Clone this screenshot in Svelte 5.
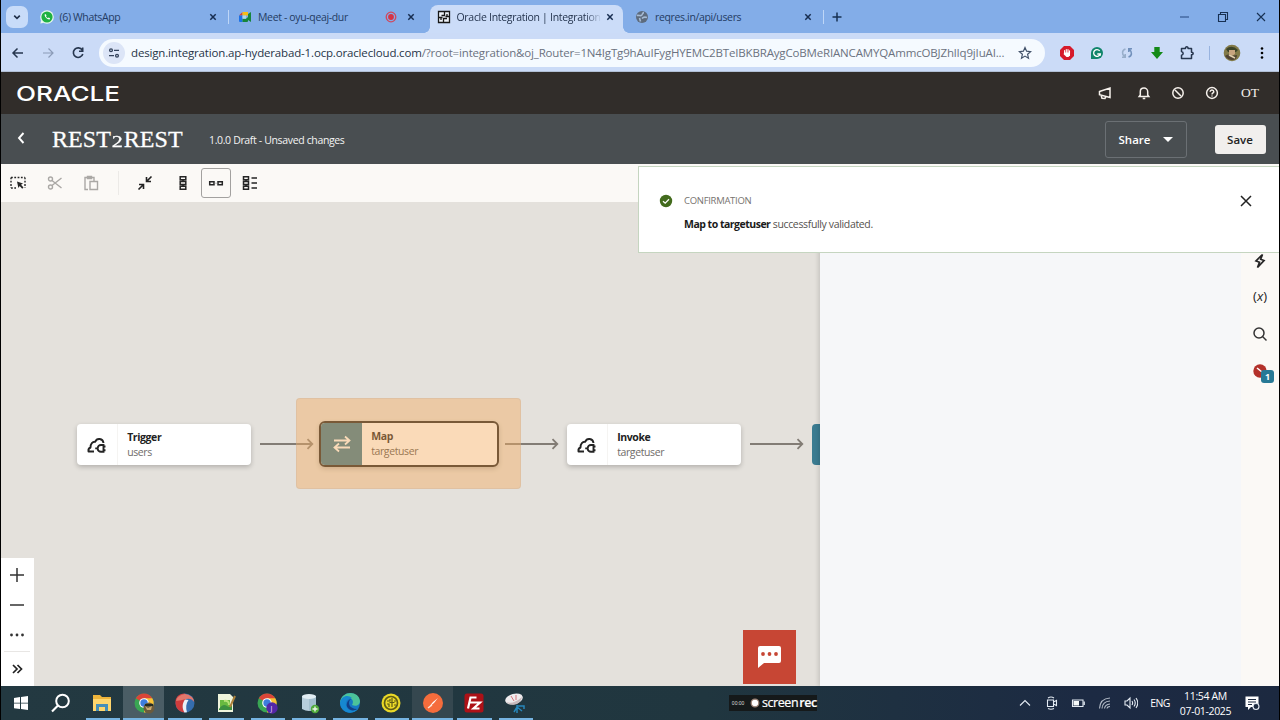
<script lang="ts">
	type Tab = {
		title: string;
		icon: 'whatsapp' | 'meet' | 'oic' | 'globe';
		active?: boolean;
		recording?: boolean;
	};

	const tabs: Tab[] = [
		{ title: '(6) WhatsApp', icon: 'whatsapp' },
		{ title: 'Meet - oyu-qeaj-dur', icon: 'meet', recording: true },
		{ title: 'Oracle Integration | Integrations', icon: 'oic', active: true },
		{ title: 'reqres.in/api/users', icon: 'globe' }
	];

	const apps = [
		{ name: 'start' },
		{ name: 'search' },
		{ name: 'explorer', open: true },
		{ name: 'chrome', open: true, focused: true },
		{ name: 'sqldev', open: true },
		{ name: 'notepad', open: true },
		{ name: 'chrome-j', open: true },
		{ name: 'database', open: true },
		{ name: 'edge', open: true },
		{ name: 'coin', open: true },
		{ name: 'postman', open: true, lit: true },
		{ name: 'filezilla', open: true },
		{ name: 'snip', open: true }
	];

	const nodes = [
		{ x: 76, title: 'Trigger', sub: 'users' },
		{ x: 566, title: 'Invoke', sub: 'targetuser' }
	];

	const arrows = [259, 504, 749];
</script>

<div class="screen">
	<div class="tabstrip">
		<div class="tab-search">
			<svg width="10" height="10" viewBox="0 0 10 10"><path d="M2.2 3.6 5 6.4l2.8-2.8" fill="none" stroke="#20304a" stroke-width="1.6" /></svg>
		</div>
		{#each tabs as tab}
			<div class="tab" class:active={tab.active}>
				<svg class="favicon" width="14" height="14" viewBox="0 0 14 14">
					{#if tab.icon === 'whatsapp'}
						<circle cx="7" cy="7" r="6.8" fill="#e8f8ee" /><path d="M.4 13.6 1.2 10l2.8 2.8Z" fill="#e8f8ee" />
						<circle cx="7" cy="7" r="5.6" fill="#1fb141" />
						<path d="M4.8 4.2c-.9 2 2.6 5.7 4.8 5.2l.5-1.1-1.5-.8-.7.7C6.9 7.8 6.2 7 6 6.3l.5-.6-.6-1.5Z" fill="#fff" />
					{:else if tab.icon === 'meet'}
						<path d="M1 5.5 4.5 2v3.5Z" fill="#d93f35" /><path d="M4.5 2H10v3.5H4.5Z" fill="#f5bd16" />
						<path d="M1 5.5h3.5V12H2a1 1 0 0 1-1-1Z" fill="#1b72e8" />
						<path d="M4.5 8.7H8L10 7V4l3-2v10l-3-2v1a1 1 0 0 1-1 1H4.5Z" fill="#17853c" />
						<path d="M4.5 5.5H8v3.2H4.5Z" fill="#aed6e5" />
					{:else if tab.icon === 'oic'}
						<path d="M1.5 1.5h11v11h-11ZM7.5 2v3.500H4.500M12 6.500H8.500M6.500 12V8.500h3.500M2 7.500h3.500M10 4v2.500M4 7.500V10" fill="#eef2f8" stroke="#171717" stroke-width="1.3" />
					{:else}
						<circle cx="7" cy="7" r="6" fill="#5d6b7d" />
						<path d="M1.8 5.5c2-.6 3 .5 4.5 0S7 2.7 9 2.6M7 8.5c1.2-1.5 3.2-1.6 5-1M4.5 8l1 3.5" fill="none" stroke="#a6bbd5" stroke-width="1.6" />
					{/if}
				</svg>
				<span class="tab-title">{tab.title}</span>
				{#if tab.recording}
					<svg class="rec" width="12" height="12" viewBox="0 0 12 12"><circle cx="6" cy="6" r="4.8" fill="none" stroke="#cf485e" stroke-width="1.3" /><circle cx="6" cy="6" r="2.9" fill="#d63345" /></svg>
				{/if}
				<svg class="tab-close" width="8" height="8" viewBox="0 0 8 8"><path d="m1.3 1.3 5.4 5.4m0-5.4L1.3 6.7" stroke="#172d50" stroke-width="1.5" /></svg>
			</div>
		{/each}
		<svg class="new-tab" width="12" height="12" viewBox="0 0 12 12"><path d="M6 1.5v9M1.5 6h9" stroke="#173052" stroke-width="1.5" /></svg>
		<div class="window-buttons">
			<svg width="12" height="12" viewBox="0 0 12 12"><path d="M1 6h9" stroke="#24477e" /></svg>
			<svg width="12" height="12" viewBox="0 0 12 12"><path d="M1.5 3.5h7v7h-7ZM3.5 3.5v-2h7v7h-2" fill="none" stroke="#173052" stroke-width="1.1" /></svg>
			<svg width="12" height="12" viewBox="0 0 12 12"><path d="m2 2 8 8m0-8-8 8" stroke="#173052" stroke-width="1.1" /></svg>
		</div>
	</div>

	<div class="browser-bar">
		<div class="cell"><svg width="14" height="14" viewBox="0 0 14 14"><path d="M12 7H2.5M6.5 2.5 2 7l4.5 4.5" fill="none" stroke="#26364f" stroke-width="1.5" /></svg></div>
		<div class="cell"><svg width="14" height="14" viewBox="0 0 14 14"><path d="M2 7h9.5M7.5 2.5 12 7l-4.500 4.500" fill="none" stroke="#8b9bb7" stroke-width="1.2" /></svg></div>
		<div class="cell"><svg width="14" height="14" viewBox="0 0 14 14"><path d="M11.2 4A4.8 4.8 0 1 0 11.8 8M11.7 1.500v3.800H8" fill="none" stroke="#26364f" stroke-width="1.6" /></svg></div>
		<div class="address">
			<span class="site-info">
				<svg width="12" height="12" viewBox="0 0 12 12"><g fill="none" stroke="#34435b" stroke-width="1.3"><circle cx="3" cy="3.3" r="1.4" /><path d="M6 3.3h5M1 8.7h5" /><circle cx="9" cy="8.7" r="1.4" /></g></svg>
			</span>
			<span class="url"><b>design.integration.ap-hyderabad-1.ocp.oraclecloud.com</b>/?root=integration&amp;oj_Router=1N4IgTg9hAuIFygHYEMC2BTeIBKBRAygCoBMeRIANCAMYQAmmcOBJZhlIq9jIuAI...</span>
			<svg class="star" width="14" height="14" viewBox="0 0 14 14"><path d="m7 1.5 1.6 3.7 4 .4-3 2.7.9 3.9L7 10.1l-3.500 2.100.9-3.900-3-2.700 4-.4Z" fill="none" stroke="#42526a" stroke-width="1.2" /></svg>
		</div>
		<div class="extensions">
			<div class="cell"><svg width="16" height="16" viewBox="0 0 16 16"><path d="M5 1h6l4 4v6l-4 4H5l-4-4V5Z" fill="#d61a2b" /><path d="M5.6 8V5.500M7.300 8V4.500M9 8V4.500M10.500 8.500V5.800" stroke="#fff" stroke-width="1.1" stroke-linecap="round" /><path d="M5 7.500h6v2.700l-1.500 1.800H7.500L4.700 9.300Z" fill="#fff" /></svg></div>
			<div class="cell"><svg width="14" height="14" viewBox="0 0 14 14"><path d="M1 13V7a6 6 0 1 1 6 6Z" fill="#10856b" /><path d="M9.7 4.8A3.4 3.4 0 1 0 10.3 8H7.3M10.3 7.3v2.5" fill="none" stroke="#fff" stroke-width="1.3" /></svg></div>
			<div class="cell"><svg width="14" height="14" viewBox="0 0 14 14"><path d="M5.500 3C2 4 1.500 8 4.500 10.500M2 11.300h3.200V8" fill="none" stroke="#98aeca" stroke-width="1.6" /><path d="M8.500 11c3.500-1 4-5 1-7.500M12 2.700H8.800V6" fill="none" stroke="#7190bb" stroke-width="1.6" /></svg></div>
			<div class="cell"><svg width="14" height="14" viewBox="0 0 14 14"><path d="M4.3 1h5.4v5H13l-6 7-6-7h3.3Z" fill="#138a18" /></svg></div>
			<div class="cell"><svg width="16" height="16" viewBox="0 0 16 16"><path d="M2.5 3.500h4C6 1.200 9.500 1.200 9 3.500h3.500v3.800c2.200-.3 2.200 2.700 0 2.400v3.800h-10v-3.200c2.200-.7 2.200-3.100 0-3.800Z" fill="none" stroke="#27364e" stroke-width="1.5" stroke-linejoin="round" /></svg></div>
		</div>
		<i class="bar-sep"></i>
		<div class="cell"><svg width="18" height="18" viewBox="0 0 18 18"><circle cx="9" cy="9" r="8.3" fill="#827a49" /><path d="M3 5q6-5 12 1l-2 2H5Z" fill="#3d4429" /><path d="M6 6h6v4l-3 2-3-2Z" fill="#c7a47f" /><path d="M2 12q3-3 6 0l6-1q0 5-5 5-4 0-7-4Z" fill="#504333" /><path d="m6 11 6 3" stroke="#e0cfaf" stroke-width="1.5" /></svg></div>
		<div class="cell"><svg width="4" height="14" viewBox="0 0 4 14"><circle cx="2" cy="2.5" r="1.3" /><circle cx="2" cy="7" r="1.3" /><circle cx="2" cy="11.5" r="1.3" /></svg></div>
	</div>

	<header class="oracle-bar">
		<svg class="logo" width="108" height="30" viewBox="0 0 108 30"><text x="1" y="22.5" textLength="104" lengthAdjust="spacingAndGlyphs">ORACLE</text></svg>
		<div class="header-icons">
			<svg width="14" height="14" viewBox="0 0 14 14"><path d="M1.5 5.5 12 2v9.5L1.5 8.7ZM3 9l1 3.3 3 .2.7-2" /></svg>
			<svg width="14" height="14" viewBox="0 0 14 14"><path d="M2.2 10.5h9.6L10.7 9V5.7c0-4.8-7.400-4.8-7.400 0V9ZM5.700 12.500h2.600" /></svg>
			<svg width="14" height="14" viewBox="0 0 14 14"><circle cx="7" cy="7" r="5.2" /><path d="m4 4 6 6" /></svg>
			<svg width="14" height="14" viewBox="0 0 14 14"><circle cx="7" cy="7" r="5.4" /><path d="M5.2 5.8c0-2.3 3.6-2.2 3.6 0C8.8 7 7 6.9 7 8.5M7 9.4v1.200" /></svg>
			<span>OT</span>
		</div>
	</header>

	<div class="title-bar">
		<svg class="back" width="10" height="14" viewBox="0 0 10 14"><path d="M7.5 2 3 7l4.5 5" fill="none" stroke="#fff" stroke-width="1.9" /></svg>
		<h1>REST<small>2</small>REST</h1>
		<span class="version">1.0.0 Draft - Unsaved changes</span>
		<button class="share">Share <i></i></button>
		<button class="save">Save</button>
	</div>

	<div class="tools">
		<svg width="16" height="16" viewBox="0 0 16 16"><path d="M1 2.5h14M1 2.5V13M15 2.5V13M1 13h5" fill="none" stroke="#252525" stroke-width="1.4" stroke-dasharray="1.8 1.5" /><path d="m7 6.5 6 2-2 1.300 2.500 2.800-1.300 1.200-2.500-2.900L8.400 13Z" fill="#252525" /></svg>
		<svg class="dim" width="16" height="16" viewBox="0 0 16 16"><circle cx="3.5" cy="4" r="2" /><circle cx="3.5" cy="12" r="2" /><path d="m5 5.5 9.5 7.5M5 10.5 14.5 3" /></svg>
		<svg class="dim" width="16" height="16" viewBox="0 0 16 16"><path d="M5 14.5H2v-12h9V6M4.5 1.5h4v2h-4ZM7 6.5h7.5v8H7Z" /></svg>
		<i class="tool-sep"></i>
		<svg width="16" height="16" viewBox="0 0 16 16"><path d="m14.5 1.5-5 5M9.5 2v4.5H14M1.5 14.5l5-5M2 9.5h4.5V14" fill="none" stroke="#222" stroke-width="1.6" /></svg>
		<svg width="16" height="16" viewBox="0 0 16 16"><path d="M5.2 1.7h5.6v3H5.2ZM5.2 6.5h5.6v3H5.2ZM5.2 11.3h5.6v3H5.2ZM8 4.7v1.8M8 9.5v1.800" fill="none" stroke="#252525" stroke-width="1.5" /></svg>
		<span class="picked"><svg width="16" height="16" viewBox="0 0 16 16"><path d="M1.7 6.7H6v3H1.7ZM10 6.7h4.3v3H10Z" fill="none" stroke="#252525" stroke-width="1.5" /><path d="M6.700 8.200h2.600" stroke="#aaa" stroke-width=".8" /></svg></span>
		<svg width="16" height="16" viewBox="0 0 16 16"><path d="M1.5 1.7h5v3h-5ZM1.5 6.5h5v3h-5ZM1.5 11.3h5v3h-5ZM9.5 3H15M9.5 8H15M9.5 13H15M4 4.7v1.8M4 9.5v1.800" fill="none" stroke="#252525" stroke-width="1.5" /></svg>
	</div>

	<main>
		<div class="canvas">
			{#each nodes as node}
				<div class="node" style:left="{node.x}px">
					<div class="node-icon">
						<svg width="22" height="20" viewBox="0 0 22 20"><path d="M8 16.500H2.500c-.5-2.500.8-3.500 2-4C4.500 8.500 6.500 6.500 9.300 6.800c1.500-4.300 7.700-3.500 8.200 1.200" fill="none" stroke="#242424" stroke-width="1.9" stroke-linejoin="round" /><path d="M17.500 10H15a3.400 3.400 0 0 0 0 6.800h2.500ZM9.200 13.400h2.400M17.500 11.500h2M17.500 15.300h2" fill="none" stroke="#242424" stroke-width="1.9" /></svg>
					</div>
					<div class="node-text"><b>{node.title}</b><span>{node.sub}</span></div>
				</div>
			{/each}
			<div class="node map">
				<div class="node-icon">
					<svg width="20" height="18" viewBox="0 0 20 18"><path d="M2 5.5h15M13 1.5l4.5 4-4.5 4M18 12.5H3M7 8.5l-4.5 4 4.5 4" fill="none" stroke="#fff" stroke-width="1.8" /></svg>
				</div>
				<div class="node-text"><b>Map</b><span>targetuser</span></div>
			</div>
			{#each arrows as x}
				<svg class="arrow" style:left="{x}px" width="56" height="12" viewBox="0 0 56 12"><path d="M0 6h52.5M47.5 1.2 52.3 6l-4.8 4.8" fill="none" stroke="#827c75" stroke-width="1.8" /></svg>
			{/each}
			<div class="node-cut"></div>
			<div class="selection"></div>

			<div class="zoom-panel">
				<svg width="16" height="16" viewBox="0 0 16 16"><path d="M8 1v14M1 8h14" stroke="#333" stroke-width="1.5" /></svg>
				<svg width="16" height="16" viewBox="0 0 16 16"><path d="M1 8h14" stroke="#333" stroke-width="1.5" /></svg>
				<svg width="16" height="16" viewBox="0 0 16 16"><circle cx="2.5" cy="8" r="1.4" fill="#333" /><circle cx="8" cy="8" r="1.4" fill="#333" /><circle cx="13.5" cy="8" r="1.4" fill="#333" /></svg>
				<svg class="expand" width="16" height="16" viewBox="0 0 16 16"><path d="m4 4 4 4-4 4M8.5 4l4 4-4 4" fill="none" stroke="#222" stroke-width="1.7" /></svg>
			</div>
			<button class="chat" aria-label="Chat">
				<svg width="26" height="24" viewBox="0 0 26 24"><path d="M3 1h19a2 2 0 0 1 2 2v13a2 2 0 0 1-2 2H7l-6 5V3a2 2 0 0 1 2-2Z" fill="#fff" /><g fill="#c74634"><circle cx="6" cy="9" r="1.9" /><circle cx="12.5" cy="9" r="1.9" /><circle cx="19" cy="9" r="1.9" /></g></svg>
			</button>
		</div>
		<aside class="panel"></aside>
		<nav class="rail">
			<svg width="16" height="16" viewBox="0 0 16 16"><path d="M10.5 1.5 4 8l3.5 1.2-2 5.3 6.5-7-3.300-1.200Z" fill="none" stroke="#252525" stroke-width="1.7" /></svg>
			<span class="vars">(<i>x</i>)</span>
			<svg width="16" height="16" viewBox="0 0 16 16"><circle cx="7" cy="7" r="5" fill="none" stroke="#333" stroke-width="1.5" /><path d="m10.5 10.5 4 4" stroke="#333" stroke-width="1.5" /></svg>
			<span class="errors">
				<svg width="14" height="14" viewBox="0 0 14 14"><circle cx="7" cy="7" r="6.7" fill="#b3312a" /><path d="m4 4 5 4" stroke="#fff" stroke-width="1.6" /></svg>
				<b>1</b>
			</span>
		</nav>
	</main>

	<footer class="taskbar">
		{#each apps as app}
			<div class="app" class:open={app.open} class:focused={app.focused} class:lit={app.lit}>
				<svg width="22" height="22" viewBox="0 0 22 22">
					{#if app.name === 'start'}
						<path d="m4 6 6-.9v5.6H4Zm7-1 7-1v6.7h-7ZM4 11.5h6v5.6l-6-.9Zm7 0h7V18l-7-1Z" fill="#fff" />
					{:else if app.name === 'search'}
						<circle cx="12.5" cy="9" r="6.3" fill="none" stroke="#fff" stroke-width="2" /><path d="m8 13.5-6 6" stroke="#fff" stroke-width="2.2" />
					{:else if app.name === 'explorer'}
						<path d="M2 3h7l2 2h9v14H2Z" fill="#eeb43b" /><path d="M2 7h18v12H2Z" fill="#ffd66d" /><path d="M5 19v-7h12v7h-3v-4H8v4Z" fill="#478fb8" />
					{:else if app.name === 'chrome' || app.name === 'chrome-j'}
						<circle cx="11" cy="11" r="9.5" fill="#39a653" />
						<path d="M11 11 2.8 6.2a9.5 9.5 0 0 1 16.5 0Z" fill="#db4538" />
						<path d="M11 11V6.2h8.3A9.5 9.5 0 0 1 11 20.5Z" fill="#f9c235" />
						<circle cx="11" cy="11" r="4.8" fill="#fff" /><circle cx="11" cy="11" r="3.7" fill="#3d7ddd" />
						{#if app.name === 'chrome'}
							<circle cx="16" cy="16" r="5.5" fill="#6b5b3d" /><path d="m12 14 3 2 4-2-1 4h-4Z" fill="#cba86f" /><path d="M12 13h8" stroke="#252d22" stroke-width="2" />
						{:else}
							<circle cx="16" cy="16" r="5.7" fill="#5327a7" /><text class="badge" x="14.5" y="18.5">J</text>
						{/if}
					{:else if app.name === 'sqldev'}
						<circle cx="11" cy="11" r="9.5" fill="#356dae" /><path d="M11 1.500C4 1.500 1 6 1.500 11.500 2 17 6 20.500 11 20.500c-2-4-2-9 1-12Z" fill="#cf3c3c" /><path d="M11 7.500c-3 4-3 9-.5 13l2.500-.3c-1.500-4-1-9 1.500-12.200Z" fill="#e9eff6" /><path d="M4 5q7-6 14 0 2 2 2.300 5Q17 5.500 12 7T2 9Q2.500 6.500 4 5Z" fill="#e2776c" />
					{:else if app.name === 'notepad'}
						<path d="M3 2h12l3 3v15H3Z" fill="#eff4dc" /><path d="M5 8h10v8H5Z" fill="#68ba40" /><path d="M4 17q4-6 8-3t5-3v7H4Z" fill="#3c9140" /><path d="M9 9q5-1 5 4" fill="none" stroke="#b3e276" stroke-width="2" /><path d="m20 4-5 11" stroke="#ac813a" stroke-width="2" />
					{:else if app.name === 'database'}
						<path d="M4 4v13q7 4 14 0V4Z" fill="#b7cedc" /><path d="M11 19V5h7v12Z" fill="#a3bfce" /><ellipse cx="11" cy="4.5" rx="7" ry="2.6" fill="#e1edf3" /><circle cx="17" cy="17" r="4.2" fill="#50aa3b" /><path d="M17 14.5v5M14.5 17h5" stroke="#edf6e8" stroke-width="1.4" />
					{:else if app.name === 'edge'}
						<circle cx="11" cy="11" r="10" fill="#1678c5" /><path d="M1 11C2-2 20-2 21 9c0 4-4 6-8 4 3-5-2-9-6-7-3 1-5 3-6 5Z" fill="#4cc39a" /><path d="M1 11c1-7 8-9 12-5-5 0-8 5-5 10 3 4 8 3 12 0C14 24 2 21 1 11Z" fill="#1688d0" /><path d="M12 7c-4 3-2 10 6 10-5 4-12-1-10-6 1-3 3-4 4-4Z" fill="#123f86" />
					{:else if app.name === 'coin'}
						<circle cx="11" cy="11" r="9.5" fill="#ead827" /><circle cx="11" cy="11" r="6.5" fill="none" stroke="#5f5b16" stroke-width="1.7" /><path d="M7 9h3V7M12 6v9M9 15v-3H7M14 9h2M14 13h2M9.5 10.5h5" fill="none" stroke="#5f5b16" stroke-width="1.2" />
					{:else if app.name === 'postman'}
						<circle cx="11" cy="11" r="10" fill="#f56c3c" /><path d="m6 16 5-6 5-4-4 5Z" fill="#fff" /><path d="m6 16 4-3" stroke="#ffe2d2" stroke-width="1.5" />
					{:else if app.name === 'filezilla'}
						<rect x="1.5" y="1.5" width="19" height="19" rx="2.5" fill="#ad1117" /><path d="M13.5 5.5h-6l-2.500 11M6.500 10.500h5M11.500 10.500h5.500l-6.500 6h6" fill="none" stroke="#fff" stroke-width="2.2" />
					{:else}
						<ellipse cx="10" cy="7" rx="9" ry="5.2" fill="#efecee" transform="rotate(-15 10 7)" /><path d="M2 10q7 3 16-5-1 5-5 7-6 2-11-2Z" fill="#c9babd" /><path d="m7 4 3 5m2-6v5" stroke="#d5757a" /><path d="m10 20 3-5 5 4M13 13v8M13 14h7v3" fill="none" stroke="#2787bb" stroke-width="1.5" />
					{/if}
				</svg>
			</div>
		{/each}
		<div class="recorder">
			<span class="timer">00:00</span>
			<svg width="10" height="10" viewBox="0 0 10 10"><circle cx="5" cy="5" r="3.8" fill="#fff" stroke="#9b8377" stroke-width="1.3" /></svg>
			<span class="brand">screen<b>rec</b></span>
		</div>
		<div class="tray">
			<svg width="14" height="14" viewBox="0 0 14 14"><path d="m2 9.5 5-5 5 5" /></svg>
			<svg width="14" height="14" viewBox="0 0 14 14"><path d="M3.500 4h6v6.500h-6ZM9.500 6l3-1.500v5l-3-1.500M4 2q3-2 6 0M4 12.500q3 1.500 6 0" /></svg>
			<svg width="14" height="14" viewBox="0 0 14 14"><path d="M1.500 4H12v6.500H1.500ZM13.300 5.500V9" /><path d="M2.500 5H8v4.500H2.500Z" fill="#f6fafa" stroke="none" /></svg>
			<svg width="14" height="14" viewBox="0 0 14 14"><path d="M2.500 12.500Q3 2.500 13 2M5 12.500q.5-7 8-7.500M7.500 12.500Q8 8.500 13 8M10 12.500q.3-2 3-2" opacity=".75" /></svg>
			<svg width="14" height="14" viewBox="0 0 14 14"><path d="M1 5h2l3-3v10L3 9H1ZM8 5q1.3 2 0 4M10 3.5q2.5 3.5 0 7M12 2q3.5 5 0 10" /></svg>
			<span class="lang">ENG</span>
			<div class="clock"><span>11:54 AM</span><span>07-01-2025</span></div>
			<svg class="notes" width="16" height="16" viewBox="0 0 16 16"><path d="M1.5 1.5h13V12H7l-3 3v-3H1.5Z" fill="#fff" stroke="none" /><path d="M4 4.5h8M4 7h8M4 9.5h4" stroke="#1d2b41" /><circle cx="12" cy="11.5" r="3" fill="#1d2b41" /></svg>
		</div>
	</footer>

	<div class="toast">
		<svg width="14" height="14" viewBox="0 0 14 14"><circle cx="7" cy="7" r="6.2" fill="#436b1d" /><path d="m4 7.2 2.2 2 3.8-4" fill="none" stroke="#fff" stroke-width="1.3" /></svg>
		<div class="toast-body">
			<span class="kind">CONFIRMATION</span>
			<p><b>Map to targetuser</b> successfully validated.</p>
		</div>
		<svg class="dismiss" width="14" height="14" viewBox="0 0 14 14"><path d="m2 2 10 10m0-10L2 12" stroke="#222" stroke-width="1.5" /></svg>
	</div>

	<svg class="pointer" width="14" height="18" viewBox="0 0 14 18"><path d="M4 10.5V2q1.2-1.5 2.2 0v5l5 1q1.6.4 1.6 2v3.5L11.5 17H6l-4.8-5.800Q1.500 9.500 4 10.500Z" fill="#fff" stroke="#222" stroke-width="1.1" /><path d="M8 8v2.5M10.3 8.5v2" stroke="#333" /></svg>
</div>

<style>
	.screen {
		position: relative;
		box-sizing: border-box;
		width: 1280px;
		height: 720px;
		display: flex;
		flex-direction: column;
		overflow: hidden;
		border: solid #000;
		border-width: 0 1px;
		font-family: 'Open Sans', 'Noto Sans', sans-serif;
		font-size: 10.5px;
		color: #222;
	}

	svg {
		display: block;
		flex: none;
	}

	button {
		font: inherit;
		padding: 0;
	}

	.tabstrip {
		height: 33px;
		display: flex;
		align-items: center;
		background: #83ade8;
	}

	.tab-search {
		width: 22px;
		height: 22px;
		margin: 0 2px 0 5px;
		border-radius: 7px;
		background: #c8dcf9;
		display: grid;
		place-items: center;
	}

	.tab {
		position: relative;
		box-sizing: border-box;
		width: 198.5px;
		height: 28px;
		align-self: flex-end;
		display: flex;
		align-items: center;
		padding: 0 12px 5px 9.5px;
		color: #233c63;
	}

	.tab:nth-child(2)::after,
	.tab:nth-child(5)::after {
		content: '';
		position: absolute;
		right: 0;
		top: 5px;
		width: 1px;
		height: 14px;
		background: #bed6f7;
	}

	.tab.active {
		color: #24344e;
	}

	.tab.active::before {
		content: '';
		position: absolute;
		inset: 0 3px 0 3px;
		border-radius: 8px 8px 0 0;
		background: #cbdcf8;
	}

	.tab.active::after {
		content: '';
		position: absolute;
		left: -3px;
		right: -3px;
		bottom: 0;
		height: 6px;
		background:
			radial-gradient(circle at 0 0, transparent 5.5px, #cbdcf8 6px) left / 6px 6px no-repeat,
			radial-gradient(circle at 100% 0, transparent 5.5px, #cbdcf8 6px) right / 6px 6px no-repeat;
	}

	.tab.active > * {
		position: relative;
		z-index: 1;
	}

	.favicon {
		margin-right: 6px;
	}

	.tab-title {
		flex: 1;
		white-space: nowrap;
		letter-spacing: -0.35px;
	}

	.active .tab-title {
		mask-image: linear-gradient(90deg, #000 86%, transparent 97%);
		letter-spacing: -0.3px;
	}

	.rec {
		margin-right: 10px;
	}

	.new-tab {
		margin-left: 7px;
	}

	.window-buttons {
		margin-left: auto;
		display: flex;
		gap: 26px;
		padding-right: 12px;
	}

	.browser-bar {
		box-sizing: border-box;
		height: 39px;
		padding: 1px 2px 0;
		display: flex;
		align-items: center;
		background: #cbdbf7;
		border-bottom: 1px solid #b1bfd5;
	}

	.cell {
		width: 30px;
		display: grid;
		place-items: center;
	}

	.address {
		box-sizing: border-box;
		width: 946px;
		height: 28px;
		margin: 0 7px 0 6px;
		padding: 0 13px 0 4px;
		border-radius: 14px;
		display: flex;
		align-items: center;
		background: #f5faff;
	}

	.site-info {
		flex: none;
		width: 22px;
		height: 22px;
		border-radius: 50%;
		display: grid;
		place-items: center;
		background: #dce5f7;
	}

	.url {
		flex: 1;
		margin-left: 6px;
		white-space: nowrap;
		font-size: 11.5px;
		letter-spacing: -0.16px;
		color: #6b7280;
	}

	.url b {
		font-weight: 400;
		color: #273447;
	}

	.extensions {
		display: flex;
	}

	.bar-sep {
		width: 1px;
		height: 14px;
		margin: 0 7px;
		background: #98b3df;
	}

	.oracle-bar {
		height: 42px;
		display: flex;
		align-items: center;
		padding-left: 14px;
		background: #312d2a;
	}

	.logo text {
		font: 500 20px Inter, sans-serif;
		fill: #fff;
	}

	.header-icons {
		margin-left: auto;
		margin-right: 20px;
		display: flex;
		align-items: center;
		gap: 20px;
	}

	.header-icons svg {
		fill: none;
		stroke: #f6f1ec;
		stroke-width: 1.5;
	}

	.header-icons svg:first-child {
		margin-right: 5px;
	}

	.header-icons span {
		margin-left: 2px;
		font: 13.5px 'Liberation Serif', serif;
		color: #f3efeb;
	}

	.title-bar {
		height: 50px;
		display: flex;
		align-items: center;
		background: #494e51;
		color: #fff;
	}

	.back {
		margin: -3px 26px 0 15px;
	}

	h1 {
		width: 157px;
		margin: 0;
		font: 24px/30px 'Liberation Serif', serif;
		letter-spacing: 0.1px;
		-webkit-text-stroke: 0.3px #fff;
	}

	h1 small {
		display: inline-block;
		font-size: 17px;
		line-height: 1;
		transform: scaleX(1.3);
		margin: 0 2px;
	}

	.version {
		padding-top: 1px;
		color: #f4f4f4;
		letter-spacing: -0.35px;
	}

	.share,
	.save {
		display: flex;
		align-items: center;
		justify-content: center;
		border-radius: 3px;
		font-weight: 600;
		font-size: 11.5px;
	}

	.share {
		box-sizing: border-box;
		width: 82px;
		height: 37px;
		margin-left: auto;
		gap: 13px;
		border: 1px solid #6b7074;
		background: none;
		color: #fff;
	}

	.share i {
		border: solid transparent;
		border-width: 5px 5px 0;
		border-top-color: #fff;
	}

	.save {
		width: 51px;
		height: 29px;
		margin: 0 13.5px 0 27.5px;
		border: 0;
		background: #f1efed;
		color: #222;
	}

	.tools {
		height: 38px;
		display: flex;
		align-items: center;
		padding-left: 9px;
		background: #fbf9f6;
	}

	.tools .dim {
		margin-left: 20.5px;
		fill: none;
		stroke: #aaa8a5;
		stroke-width: 1.4;
	}

	.tool-sep {
		width: 1px;
		height: 24px;
		margin: 0 18px 0 19px;
		background: #eceae7;
	}

	.tool-sep + svg {
		margin-right: 22px;
	}

	.picked {
		box-sizing: border-box;
		width: 30px;
		height: 30px;
		margin: 0 11px 0 10px;
		border: 1px solid #a3a19f;
		border-radius: 3px;
		display: grid;
		place-items: center;
	}

	main {
		flex: 1;
		min-height: 0;
		display: flex;
	}

	.canvas {
		position: relative;
		width: 819px;
		overflow: hidden;
		background: #e4e1dc;
	}

	.node {
		position: absolute;
		top: 222px;
		width: 174px;
		height: 41px;
		display: flex;
		overflow: hidden;
		border-radius: 4px;
		background: #fff;
		box-shadow: 0 2px 5px rgba(0, 0, 0, 0.22);
	}

	.node-icon {
		width: 40px;
		display: grid;
		place-items: center;
		border-right: 1px solid #f5f4f2;
	}

	.node-text {
		display: flex;
		flex-direction: column;
		justify-content: center;
		padding: 0 0 0 9.2px;
		line-height: 15px;
	}

	.node-text span {
		color: #6f6c69;
		letter-spacing: -0.4px;
	}

	.node-text b {
		font-weight: 700;
		letter-spacing: -0.4px;
	}

	.map {
		left: 318px;
		top: 219px;
		width: 176px;
		height: 42px;
		border: 2px solid #151515;
		border-radius: 6px;
	}

	.map .node-icon {
		background: #28728c;
		border: 0;
		width: 41px;
	}

	.map .node-text b {
		color: #111;
	}

	.map .node-text span {
		color: #4d4a47;
	}

	.arrow {
		position: absolute;
		top: 236px;
	}

	.node-cut {
		position: absolute;
		left: 811px;
		top: 222px;
		width: 30px;
		height: 41px;
		border-radius: 4px;
		background: #3b7c91;
	}

	.selection {
		position: absolute;
		left: 295px;
		top: 196px;
		width: 225px;
		height: 91px;
		border-radius: 4px;
		background: rgba(244, 174, 98, 0.45);
		box-shadow: inset 0 0 0 1px rgba(180, 165, 150, 0.2);
	}

	.zoom-panel {
		position: absolute;
		left: 0;
		bottom: 0;
		box-sizing: border-box;
		width: 33px;
		height: 128px;
		padding: 9px 2px 0 0;
		display: flex;
		flex-direction: column;
		align-items: center;
		gap: 14px;
		background: #fff;
	}

	.expand {
		padding: 9px 5px 0;
		margin-top: -6px;
		border-top: 1px solid #e8e6e4;
	}

	.chat {
		position: absolute;
		left: 742px;
		top: 428px;
		width: 53px;
		height: 54px;
		border: 0;
		display: grid;
		place-items: center;
		background: #c74634;
	}

	.panel {
		flex: 1;
		background: #f6f7f9;
		box-shadow: -2px 0 4px rgba(0, 0, 0, 0.12);
		z-index: 1;
	}

	.rail {
		box-sizing: border-box;
		z-index: 1;
		width: 38px;
		padding-top: 51px;
		display: flex;
		flex-direction: column;
		align-items: center;
		background: #fbf9f6;
	}

	.vars {
		height: 20px;
		margin: 17px 0 20px;
		font-size: 13px;
		line-height: 20px;
	}

	.errors {
		position: relative;
		margin-top: 22px;
	}

	.errors b {
		position: absolute;
		left: 8px;
		top: 6px;
		width: 13px;
		height: 13px;
		border-radius: 3px;
		background: #277996;
		color: #fff;
		font-size: 9px;
		line-height: 13px;
		text-align: center;
	}

	.taskbar {
		height: 34px;
		display: flex;
		background: linear-gradient(90deg, #233941 0, #20363f 55%, #1c2a43 85%, #1c2940);
		color: #fff;
	}

	.app {
		width: 41.3px;
		position: relative;
		display: grid;
		place-items: center;
	}

	.app:first-child {
		width: 39.3px;
	}

	.app.focused {
		background: #4a5d65;
	}

	.app.lit {
		background: #35474f;
	}

	.app.open::after {
		content: '';
		position: absolute;
		left: 4px;
		right: 3px;
		bottom: 0;
		height: 2px;
		background: #76b4e2;
	}

	.app.focused::after,
	.app.lit::after {
		left: 0;
		right: 0;
	}

	.badge {
		font-size: 7px;
		fill: #eadcff;
	}

	.recorder {
		width: 88px;
		height: 16px;
		margin: 9px 0 0 193px;
		display: flex;
		align-items: center;
		gap: 2px;
		background: #15191a;
	}

	.timer {
		width: 17px;
		padding-left: 3px;
		font: 5px 'Liberation Sans', sans-serif;
		color: #ddd;
	}

	.brand {
		font: 12.5px/14px 'Open Sans', sans-serif;
		letter-spacing: -0.4px;
		padding-bottom: 1px;
		-webkit-text-stroke: 0.2px #fff;
	}

	.brand b {
		margin-left: 1px;
		font-weight: 600;
	}

	.tray {
		margin-left: auto;
		display: flex;
		align-items: center;
		gap: 12.5px;
		padding-right: 19px;
	}

	.tray svg {
		fill: none;
		stroke: #e4ebf3;
		stroke-width: 1.1;
	}

	.lang {
		letter-spacing: -0.5px;
	}

	.clock {
		width: 52px;
		margin-left: -3px;
		display: flex;
		flex-direction: column;
		align-items: center;
		line-height: 15px;
		padding-top: 1px;
		letter-spacing: -0.35px;
		white-space: nowrap;
	}

	.toast {
		position: absolute;
		left: 637px;
		top: 166px;
		z-index: 3;
		box-sizing: border-box;
		width: 641px;
		height: 87px;
		padding: 27px 26px 0 20px;
		display: flex;
		border: 1px solid #c5d5c0;
		border-right: 0;
		background: #fff;
	}

	.toast-body {
		flex: 1;
		margin-left: 11px;
	}

	.kind {
		display: block;
		font-size: 9.5px;
		line-height: 14px;
		letter-spacing: -0.3px;
		color: #77736f;
	}

	.toast p {
		margin: 8px 0 0;
		line-height: 16px;
		letter-spacing: -0.35px;
		color: #55514e;
	}

	.toast b {
		letter-spacing: -0.5px;
		color: #1b1b1b;
	}

	.pointer {
		position: absolute;
		left: 970px;
		top: 352px;
	}
</style>
